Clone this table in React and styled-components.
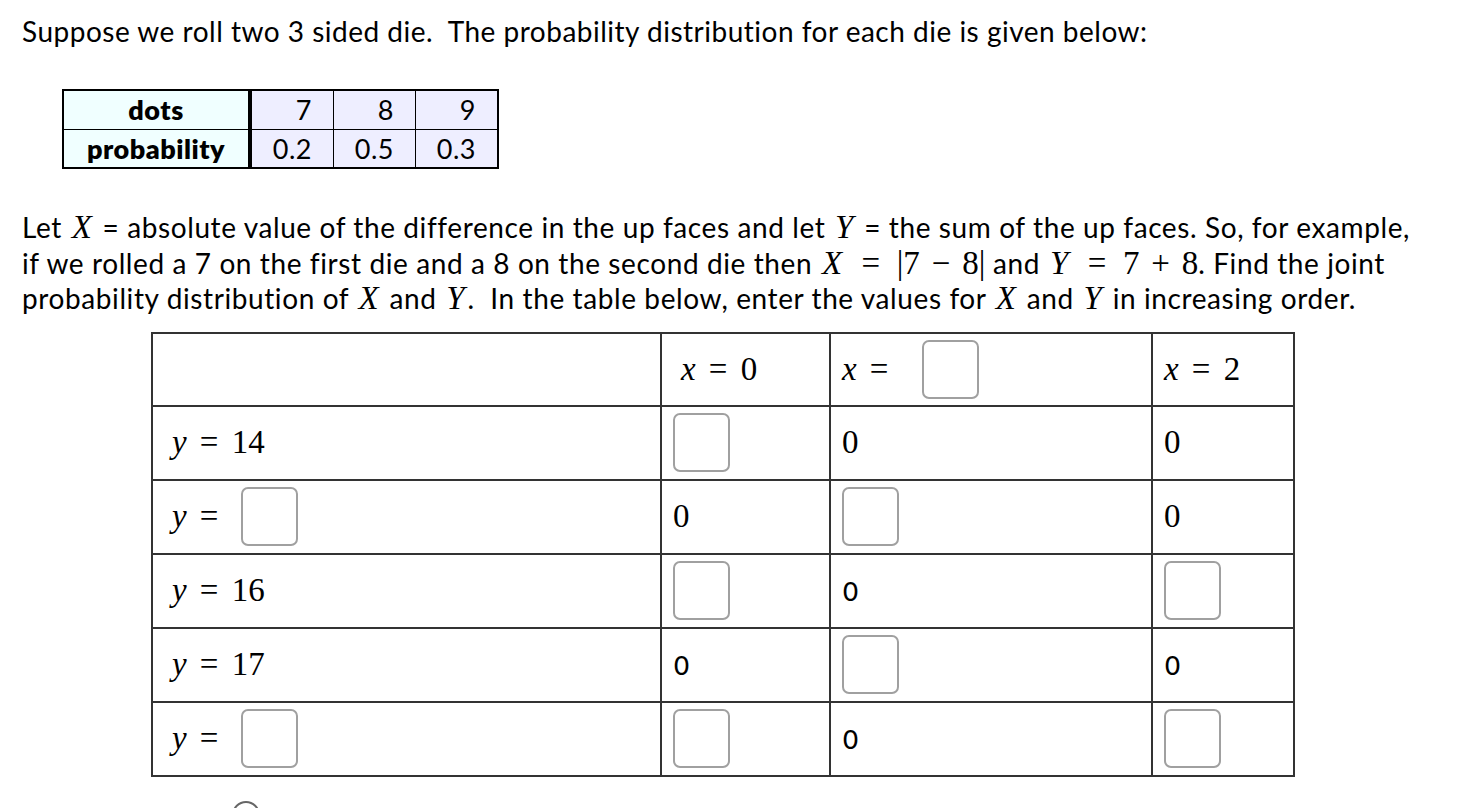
import React from "react";
import styled, { createGlobalStyle } from "styled-components";

const Global = createGlobalStyle`
  html, body { margin: 0; padding: 0; background: #fff; overflow: hidden; }
  body { font-family: Lato, "Open Sans", sans-serif; color: #000; }
`;

const Page = styled.div`
  padding: 13px 0 0 22px;
  width: 1452px;
`;

const Para = styled.div`
  font-size: 28px;
  letter-spacing: ${(p) => p.$ls || 0.45}px;
  line-height: ${(p) => p.$lh || 36}px;
  margin: ${(p) => p.$margin || "0"};
  white-space: nowrap;
`;

const Line = styled.div`
  height: 35.5px;
`;

const MathVar = styled.span`
  font-family: "Liberation Serif", "DejaVu Serif", serif;
  font-style: italic;
  letter-spacing: 0;
  font-size: ${(p) => p.$size || 33}px;
  padding: 0 ${(p) => (p.$tight ? 0 : 3)}px 0 ${(p) => (p.$tight ? 0 : 2)}px;
`;

const MathUp = styled.span`
  font-family: "Liberation Serif", "DejaVu Serif", serif;
  letter-spacing: 0;
  font-size: ${(p) => p.$size || 33}px;
`;

const Rel = styled.span`
  font-family: "Liberation Serif", "DejaVu Serif", serif;
  letter-spacing: 0;
  font-size: ${(p) => p.$size || 33}px;
  margin: 0 ${(p) => (p.$wide ? 0.5 : 0.4)}em;
`;

const Bin = styled.span`
  font-family: "Liberation Serif", "DejaVu Serif", serif;
  letter-spacing: 0;
  font-size: ${(p) => p.$size || 33}px;
  margin: 0 0.36em;
`;

const DieTable = styled.table`
  border-collapse: collapse;
  margin: 40px 0 0 40px;
  border: 2px solid #000;
`;

const DieCell = styled.td`
  height: 37.5px;
  padding: 0 ${(p) => (p.$label ? 0 : 21)}px 0 0;
  width: ${(p) => (p.$label ? 184 : 60)}px;
  text-align: ${(p) => (p.$label ? "center" : "right")};
  font-weight: ${(p) => (p.$label ? 800 : 400)};
  font-size: 27px;
  letter-spacing: 0.5px;
  background: ${(p) => (p.$label ? "#f0ffff" : "#eeeeff")};
  border: 1.5px solid #000;
  border-right: ${(p) => (p.$label ? "4px solid #000" : "1.5px solid #000")};
  line-height: 1;
`;

const JointTable = styled.table`
  border-collapse: collapse;
  margin: 15px 0 0 129px;
  border: 2px solid #333;
  table-layout: fixed;
`;

const Cell = styled.td`
  border: 2px solid #333;
  height: ${(p) => p.$h || 74}px;
  width: ${(p) => p.$w}px;
  padding: 0 0 0 ${(p) => p.$indent ?? 11}px;
  vertical-align: middle;
  box-sizing: border-box;
`;

const CellInner = styled.div`
  display: flex;
  align-items: center;
  white-space: nowrap;
`;

const AnswerBox = styled.span`
  display: inline-block;
  width: 53px;
  height: 55px;
  border: 2px solid #a0a0a0;
  border-radius: 7px;
  background: #fff;
  margin-left: ${(p) => p.$ml || 0}px;
`;

const SerifZero = styled.span`
  font-family: "Liberation Serif", "DejaVu Serif", serif;
  font-size: 33px;
`;

const SansZero = styled.span`
  font-family: Lato, "Open Sans", sans-serif;
  font-size: 26px;
  font-weight: 500;
  padding-left: 1px;
`;

const RadioRow = styled.div`
  margin: 24px 0 0 210px;
`;

const Radio = styled.span`
  display: inline-block;
  width: 24px;
  height: 24px;
  border: 2px solid #666;
  border-radius: 50%;
`;

const widths = [509, 169, 322, 142];

function Eq({ v, val, box, boxMl = 10 }) {
  return (
    <CellInner>
      <MathVar $size={33} $tight>{v}</MathVar>
      <Rel $size={33}>=</Rel>
      {box ? <AnswerBox $ml={boxMl} /> : <MathUp $size={33}>{val}</MathUp>}
    </CellInner>
  );
}

function Val({ kind }) {
  if (kind === "box") return <CellInner><AnswerBox /></CellInner>;
  if (kind === "s") return <CellInner><SerifZero>0</SerifZero></CellInner>;
  return <CellInner><SansZero>0</SansZero></CellInner>;
}

const rows = [
  { y: "14", cells: ["box", "s", "s"] },
  { y: null, cells: ["s", "box", "s"] },
  { y: "16", cells: ["box", "a", "box"] },
  { y: "17", cells: ["a", "box", "a"] },
  { y: null, cells: ["box", "a", "box"] },
];

export default function App() {
  return (
    <>
      <Global />
      <Page>
        <Para $ls={0.5}>Suppose we roll two 3 sided die.&nbsp; The probability distribution for each die is given below:</Para>
        <DieTable>
          <tbody>
            <tr>
              <DieCell $label>dots</DieCell>
              <DieCell>7</DieCell>
              <DieCell>8</DieCell>
              <DieCell>9</DieCell>
            </tr>
            <tr>
              <DieCell $label>probability</DieCell>
              <DieCell>0.2</DieCell>
              <DieCell>0.5</DieCell>
              <DieCell>0.3</DieCell>
            </tr>
          </tbody>
        </DieTable>
        <Para $lh={35.5} $ls={0.6} $margin="41px 0 0 0">
          <Line>
            Let <MathVar>X</MathVar> = absolute value of the difference in the up faces and let <MathVar>Y</MathVar> = the sum of the up faces. So, for example,
          </Line>
          <Line>
            if we rolled a 7 on the first die and a 8 on the second die then <MathVar>X</MathVar>
            <Rel $wide>=</Rel>
            <MathUp>|7</MathUp>
            <Bin>−</Bin>
            <MathUp>8|</MathUp> and <MathVar>Y</MathVar>
            <Rel $wide>=</Rel>
            <MathUp>7</MathUp>
            <Bin>+</Bin>
            <MathUp>8</MathUp>. Find the joint
          </Line>
          <Line>
            probability distribution of <MathVar>X</MathVar> and <MathVar>Y</MathVar>.&nbsp; In the table below, enter the values for <MathVar>X</MathVar> and <MathVar>Y</MathVar> in increasing order.
          </Line>
        </Para>
        <JointTable>
          <tbody>
            <tr>
              <Cell $w={widths[0]} $h={73} />
              <Cell $w={widths[1]} $h={73} $indent={19}><Eq v="x" val="0" /></Cell>
              <Cell $w={widths[2]} $h={73} $indent={11}><Eq v="x" box boxMl={20} /></Cell>
              <Cell $w={widths[3]} $h={73} $indent={11}><Eq v="x" val="2" /></Cell>
            </tr>
            {rows.map((r, i) => (
              <tr key={i}>
                <Cell $w={widths[0]} $indent={19}>
                  {r.y ? <Eq v="y" val={r.y} /> : <Eq v="y" box boxMl={9} />}
                </Cell>
                {r.cells.map((c, j) => (
                  <Cell key={j} $w={widths[j + 1]}>
                    <Val kind={c} />
                  </Cell>
                ))}
              </tr>
            ))}
          </tbody>
        </JointTable>
        <RadioRow><Radio /></RadioRow>
      </Page>
    </>
  );
}
